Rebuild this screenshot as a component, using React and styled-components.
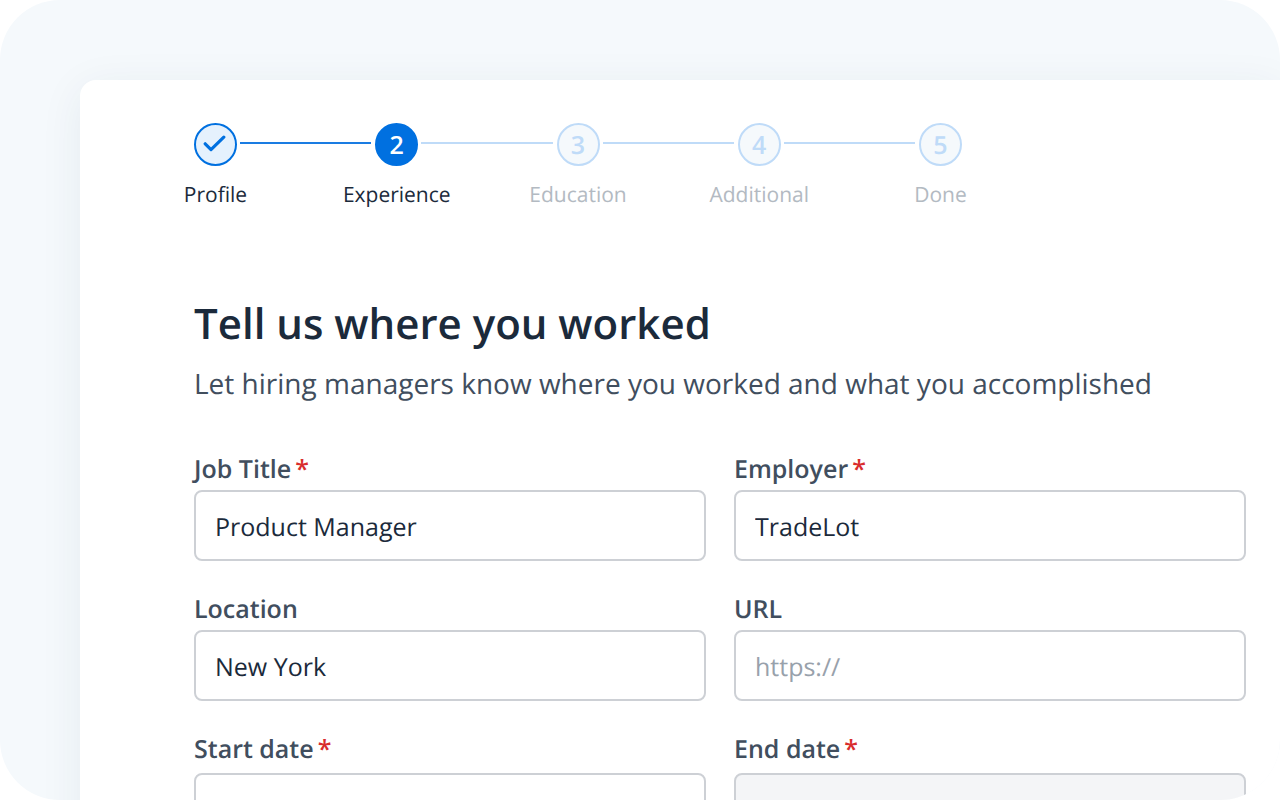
import React, { useState } from 'react'
import styled, { createGlobalStyle } from 'styled-components'

const GlobalStyle = createGlobalStyle`
  * {
    box-sizing: border-box;
  }

  body {
    margin: 0;
    background: #fff;
    font-family: "Open Sans", "Noto Sans", sans-serif;
    text-rendering: geometricPrecision;
  }
`

const Backdrop = styled.div`
  display: flex;
  height: 100vh;
  padding: 80px 0 0 80px;
  overflow: hidden;
  border-radius: 60px;
  background-color: #f5f9fc;
`

const Card = styled.main`
  flex: 1;
  min-width: 0;
  height: max-content;
  padding: 43px 34px 80px 114px;
  border-radius: 16px 0 0 0;
  background-color: #fff;
  box-shadow: 0 8px 44px rgba(26, 60, 80, .07);
`

const Stepper = styled.ol`
  display: flex;
  align-items: flex-start;
  max-width: 768px;
  margin: 0;
  padding: 0;
  list-style: none;
`

const Step = styled.li`
  display: flex;
  flex: ${props => props.$last ? 'none' : '1'};
`

const StepMarker = styled.div`
  display: flex;
  flex-direction: column;
  align-items: center;
  width: 43px;
`

const StepCircle = styled.span`
  display: flex;
  align-items: center;
  justify-content: center;
  width: 43px;
  height: 43px;
  flex: none;
  border: 2px solid ${props => props.$state === 'next' ? '#bfdbf8' : '#0070e0'};
  border-radius: 50%;
  background-color: ${props => ({ done: '#e5f1fd', current: '#0070e0', next: '#f5f9fc' })[props.$state]};
  color: ${props => props.$state === 'next' ? '#bfdbf8' : '#fff'};
  font-size: 25px;
  font-weight: 600;
  line-height: 34px;
`

const StepLabel = styled.span`
  margin-top: 14px;
  color: ${props => props.$state === 'next' ? '#b3bac2' : '#1b2a3b'};
  font-size: 21px;
  line-height: 30px;
  white-space: nowrap;
`

const StepLine = styled.span`
  flex: 1;
  height: 2px;
  margin: 19px 4px 0 3px;
  background-color: ${props => props.$done ? '#1a7ce2' : '#bfdbf8'};
`

const Title = styled.h1`
  margin: 84px 0 0;
  color: #1b2a3b;
  font-size: 42px;
  font-weight: 600;
  line-height: 60px;
`

const Subtitle = styled.p`
  margin: 10px 0 0;
  color: #414e5e;
  font-size: 28px;
  line-height: 40px;
`

const Form = styled.form`
  display: grid;
  grid-template-columns: 1fr 1fr;
  gap: 30px 28px;
  margin-top: 47px;
`

const Field = styled.div`
  display: flex;
  flex-direction: column;
  gap: ${props => props.$date ? '6px' : '3px'};
`

const Label = styled.label`
  color: #414e5e;
  font-size: 25px;
  font-weight: 600;
  line-height: 36px;
`

const Required = styled.span`
  margin-left: 4px;
  color: #d92d2d;
`

const TextInput = styled.input`
  width: 100%;
  height: 71px;
  padding: 2px 19px 0;
  border: 2px solid #cdd0d5;
  border-radius: 8px;
  outline: none;
  background-color: #fff;
  color: #1b2a3b;
  font-family: inherit;
  font-size: 25px;
  text-rendering: inherit;

  &::placeholder {
    color: #98a1ab;
    opacity: 1;
  }

  &:focus-visible {
    border-color: #0070e0;
  }

  &:disabled {
    background-color: #f4f5f7;
  }
`

const CheckIcon = () => (
  <svg width="25" height="21" viewBox="0 0 25 21" fill="none" aria-hidden="true">
    <path
      d="M2.2 9.8L8 15.6L20.8 3.2"
      stroke="#0070e0"
      strokeWidth="3.2"
      strokeLinecap="round"
      strokeLinejoin="round"
    />
  </svg>
)

const steps = [
  { name: 'Profile', state: 'done' },
  { name: 'Experience', state: 'current' },
  { name: 'Education', state: 'next' },
  { name: 'Additional', state: 'next' },
  { name: 'Done', state: 'next' }
]

const fields = [
  { id: 'job-title', label: 'Job Title', required: true },
  { id: 'employer', label: 'Employer', required: true },
  { id: 'location', label: 'Location' },
  { id: 'url', label: 'URL', placeholder: 'https://' },
  { id: 'start-date', label: 'Start date', required: true, date: true },
  { id: 'end-date', label: 'End date', required: true, date: true, disabled: true }
]

const App = () => {
  const [values, setValues] = useState({
    'job-title': 'Product Manager',
    employer: 'TradeLot',
    location: 'New York'
  })

  const handleChange = (event) => {
    const { id, value } = event.target
    setValues(current => ({ ...current, [id]: value }))
  }

  return (
    <>
      <GlobalStyle />
      <Backdrop>
        <Card>
          <Stepper>
            {steps.map((step, index) => {
              const last = index === steps.length - 1
              return (
                <Step
                  key={step.name}
                  $last={last}
                  aria-current={step.state === 'current' ? 'step' : undefined}
                >
                  <StepMarker>
                    <StepCircle $state={step.state}>
                      {step.state === 'done' ? <CheckIcon /> : index + 1}
                    </StepCircle>
                    <StepLabel $state={step.state}>{step.name}</StepLabel>
                  </StepMarker>
                  {!last && <StepLine $done={step.state === 'done'} />}
                </Step>
              )
            })}
          </Stepper>
          <Title>Tell us where you worked</Title>
          <Subtitle>Let hiring managers know where you worked and what you accomplished</Subtitle>
          <Form>
            {fields.map(field => (
              <Field key={field.id} $date={field.date}>
                <Label htmlFor={field.id}>
                  {field.label}
                  {field.required && <Required>*</Required>}
                </Label>
                <TextInput
                  id={field.id}
                  type='text'
                  placeholder={field.placeholder}
                  required={field.required}
                  disabled={field.disabled}
                  value={values[field.id] || ''}
                  onChange={handleChange}
                />
              </Field>
            ))}
          </Form>
        </Card>
      </Backdrop>
    </>
  )
}

export default App
